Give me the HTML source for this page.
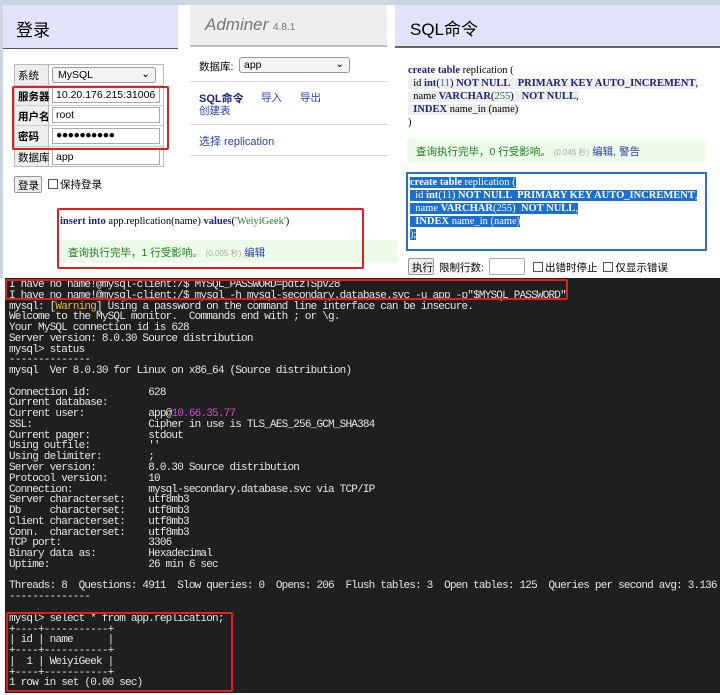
<!DOCTYPE html>
<html><head><meta charset="utf-8"><style>
*{margin:0;padding:0;box-sizing:border-box}
body{width:720px;height:695px;position:relative;background:#fff;font-family:"Liberation Sans","Noto Sans CJK SC",sans-serif;font-size:11px;color:#000;overflow:hidden}
.a{position:absolute;white-space:pre}
.cj{font-family:"Liberation Sans","Noto Sans CJK SC",sans-serif}
.mono{font-family:"Liberation Serif","Noto Serif CJK SC",serif;font-size:10.5px}
.lnk{color:#2a3fb0}
.red{position:absolute;border:2px solid #e0201c;border-radius:2px}
.term{position:absolute;left:5px;top:278px;width:715px;height:415px;background:#1f1f1f;color:#e6e6e6;font-family:"Liberation Mono",monospace;font-size:11px;line-height:10.76px;padding:2px 0 0 4px;white-space:pre;letter-spacing:-0.8px;overflow:hidden}
.cb{display:inline-block;width:10px;height:10px;border:1px solid #555;vertical-align:-1px;margin-right:2px;background:#fff}
</style></head><body>
<div class="a" style="left:0;top:0;width:720px;height:5px;background:#cbd5e3"></div>
<div class="a" style="left:0;top:0;width:3px;height:278px;background:#cbd5e3"></div>
<div class="a" style="left:3px;top:5px;width:175px;height:44px;background:#e2e2fa;border-bottom:1px solid #555"></div>
<div class="a cj" style="left:16px;top:16px;font-size:17px">登录</div>
<div class="a" style="left:14px;top:64px;width:150px;height:103px;border:1px solid #bbb;background:#fff"></div>
<div class="a" style="left:14px;top:64px;width:35px;height:103px;background:#eee;border:1px solid #bbb"></div>
<div class="a" style="left:14px;top:85px;width:150px;height:1px;background:#ccc"></div>
<div class="a" style="left:14px;top:105px;width:150px;height:1px;background:#ccc"></div>
<div class="a" style="left:14px;top:125px;width:150px;height:1px;background:#ccc"></div>
<div class="a" style="left:14px;top:146px;width:150px;height:1px;background:#ccc"></div>
<div class="a" style="left:18px;top:68px;font-size:10.5px">系统</div>
<div class="a" style="left:18px;top:89px;font-size:10.5px;font-weight:bold">服务器</div>
<div class="a" style="left:18px;top:109px;font-size:10.5px;font-weight:bold">用户名</div>
<div class="a" style="left:18px;top:129px;font-size:10.5px;font-weight:bold">密码</div>
<div class="a" style="left:18px;top:150px;font-size:10.5px">数据库</div>
<div class="a" style="left:52px;top:67px;width:104px;height:16px;border:1px solid #999;border-radius:3px;background:#f4f4f4;padding:1px 5px;font-size:10.5px">MySQL<span style="position:absolute;right:5px;top:0">⌄</span></div>
<div class="a" style="left:52px;top:87px;width:108px;height:16px;border:1px solid #aaa;padding:1px 3px;font-size:10.5px">10.20.176.215:31006</div>
<div class="a" style="left:52px;top:107px;width:108px;height:16px;border:1px solid #aaa;padding:1px 3px;font-size:10.5px">root</div>
<div class="a" style="left:52px;top:128px;width:108px;height:16px;border:1px solid #aaa;padding:0 3px;font-size:10.5px;letter-spacing:-0.5px">●●●●●●●●●●</div>
<div class="a" style="left:52px;top:149px;width:108px;height:16px;border:1px solid #aaa;padding:1px 3px;font-size:10.5px">app</div>
<div class="red" style="left:12px;top:86px;width:157px;height:64px"></div>
<div class="a" style="left:14px;top:176px;width:28px;height:17px;border:1px solid #999;border-radius:2px;background:#eee;font-size:10.5px;padding:1px 3px">登录</div>
<div class="a" style="left:48px;top:177px;font-size:10.5px"><span class="cb"></span>保持登录</div>
<div class="a" style="left:58px;top:240px;width:340px;height:23px;background:#edfbe9"></div>
<div class="a mono" style="left:60px;top:216px"><b style="color:#1d237a">insert into</b> app.replication(name) <b style="color:#1d237a">values</b>(<span style="color:#2a7a2a">'WeiyiGeek'</span>)</div>
<div class="a" style="left:68px;top:245px;font-size:10.5px;color:#1e7a1e">查询执行完毕，1 行受影响。 <span style="color:#aaa;font-size:8px">(0.005 秒)</span> <span class="lnk">编辑</span></div>
<div class="red" style="left:57px;top:208px;width:307px;height:61px"></div>
<div class="a" style="left:190px;top:5px;width:197px;height:42px;background:#eee;border-bottom:2px solid #bbb"></div>
<div class="a" style="left:205px;top:15px;font-size:17px;font-style:italic;color:#777">Adminer <span style="font-size:10px;font-style:normal">4.8.1</span></div>
<div class="a" style="left:199px;top:59px;font-size:10.5px">数据库:</div>
<div class="a" style="left:239px;top:57px;width:111px;height:16px;border:1px solid #999;border-radius:3px;background:#f4f4f4;padding:1px 4px;font-size:10.5px">app<span style="position:absolute;right:5px;top:0">⌄</span></div>
<div class="a" style="left:190px;top:81px;width:197px;height:1px;background:#ddd"></div>
<div class="a" style="left:199px;top:90px;font-size:11px;font-weight:bold;color:#1d237a">SQL命令</div>
<div class="a lnk" style="left:261px;top:90px;font-size:10.5px">导入</div>
<div class="a lnk" style="left:300px;top:90px;font-size:10.5px">导出</div>
<div class="a lnk" style="left:199px;top:103px;font-size:10.5px">创建表</div>
<div class="a" style="left:190px;top:124px;width:197px;height:1px;background:#ddd"></div>
<div class="a lnk" style="left:199px;top:133px;font-size:11px">选择 replication</div>
<div class="a" style="left:190px;top:155px;width:197px;height:1px;background:#ddd"></div>
<div class="a" style="left:395px;top:5px;width:325px;height:43px;background:#e2e2fa;border-bottom:2px solid #666"></div>
<div class="a" style="left:410px;top:15px;font-size:17px">SQL命令</div>
<div class="a mono" style="left:408px;top:64px;line-height:13px"><b style="color:#1d237a">create table</b> replication (
<span style="background:#eee">  id <b style="color:#1d237a">int</b>(<span style="color:#2a7a7a">11</span>) <b style="color:#1d237a">NOT NULL   PRIMARY KEY AUTO_INCREMENT</b>,</span>
<span style="background:#eee">  name <b style="color:#1d237a">VARCHAR</b>(<span style="color:#2a7a7a">255</span>)   <b style="color:#1d237a">NOT NULL</b>,</span>
<span style="background:#eee">  <b style="color:#1d237a">INDEX</b> name_in (name)</span>
)</div>
<div class="a" style="left:407px;top:139px;width:298px;height:24px;background:#edfbe9"></div>
<div class="a" style="left:416px;top:144px;font-size:10.5px;color:#1e7a1e">查询执行完毕，0 行受影响。 <span style="color:#aaa;font-size:8px">(0.045 秒)</span> <span class="lnk">编辑, 警告</span></div>
<div class="a" style="left:406px;top:172px;width:301px;height:79px;border:2px solid #2a6fc9;background:#fff"></div>
<div class="a mono" style="left:410px;top:176px;line-height:13px;color:#fff"><span style="background:#1a6fd0"><b>create table</b> replication (</span>
<span style="background:#1a6fd0">  id <b>int</b>(11) <b>NOT NULL  PRIMARY KEY AUTO_INCREMENT</b>,</span>
<span style="background:#1a6fd0">  name <b>VARCHAR</b>(255)  <b>NOT NULL</b>,</span>
<span style="background:#1a6fd0">  <b>INDEX</b> name_in (name)</span>
<span style="background:#1a6fd0">);</span></div>
<div class="a" style="left:408px;top:258px;width:26px;height:17px;border:1px solid #999;border-radius:2px;background:#eee;font-size:10.5px;padding:1px 3px">执行</div>
<div class="a" style="left:439px;top:260px;font-size:10.5px">限制行数:</div>
<div class="a" style="left:489px;top:258px;width:36px;height:17px;border:1px solid #aaa;border-radius:2px"></div>
<div class="a" style="left:533px;top:260px;font-size:10.5px"><span class="cb"></span>出错时停止 <span class="cb" style="margin-left:3px"></span>仅显示错误</div>
<div class="term">I have no name!@mysql-client:/$ MYSQL_PASSWORD=pdtzTSpV28
I have no name!@mysql-client:/$ mysql -h mysql-secondary.database.svc -u app -p"$MYSQL_PASSWORD"
mysql: [<span style="color:#e0c020">Warning</span>] Using a password on the command line interface can be insecure.
Welcome to the MySQL monitor.  Commands end with ; or \g.
Your MySQL connection id is 628
Server version: 8.0.30 Source distribution
mysql> status
--------------
mysql  Ver 8.0.30 for Linux on x86_64 (Source distribution)

Connection id:          628
Current database:
Current user:           app@<span style="color:#d050d0">10.66.35.77</span>
SSL:                    Cipher in use is TLS_AES_256_GCM_SHA384
Current pager:          stdout
Using outfile:          ''
Using delimiter:        ;
Server version:         8.0.30 Source distribution
Protocol version:       10
Connection:             mysql-secondary.database.svc via TCP/IP
Server characterset:    utf8mb3
Db     characterset:    utf8mb3
Client characterset:    utf8mb3
Conn.  characterset:    utf8mb3
TCP port:               3306
Binary data as:         Hexadecimal
Uptime:                 26 min 6 sec

Threads: 8  Questions: 4911  Slow queries: 0  Opens: 206  Flush tables: 3  Open tables: 125  Queries per second avg: 3.136
--------------

mysql> select * from app.replication;
+----+-----------+
| id | name      |
+----+-----------+
|  1 | WeiyiGeek |
+----+-----------+
1 row in set (0.00 sec)</div>
<div class="red" style="left:5px;top:279px;width:563px;height:21px"></div>
<div class="red" style="left:6px;top:612px;width:227px;height:80px"></div>
</body></html>
